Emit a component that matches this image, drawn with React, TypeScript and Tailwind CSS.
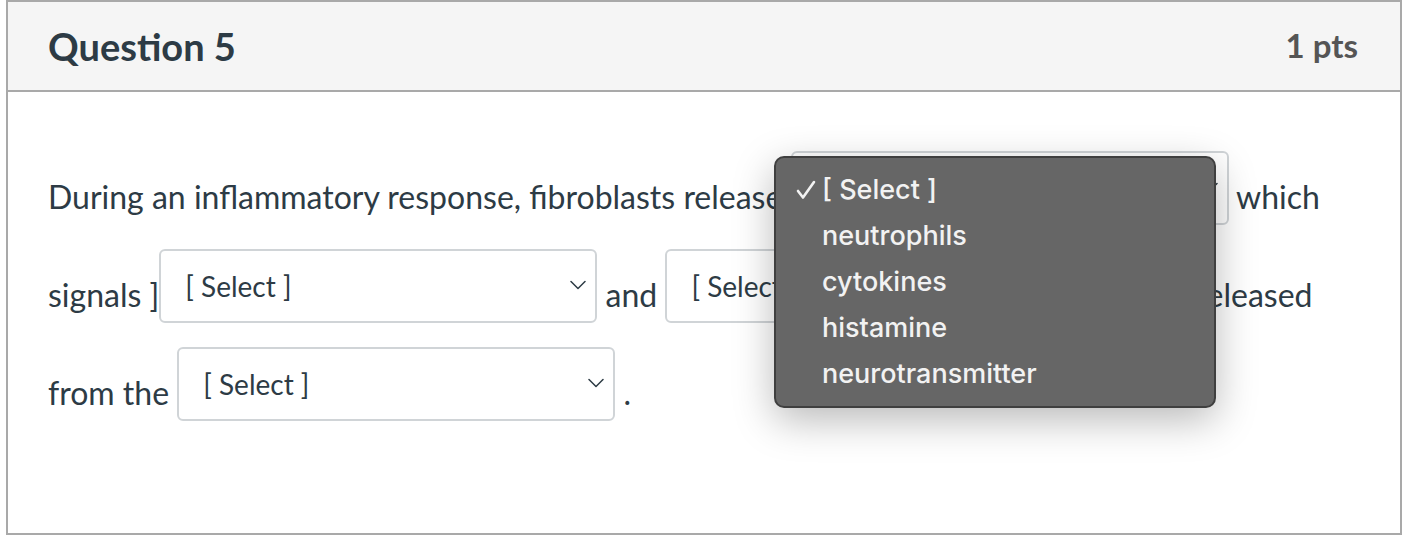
import React from "react";

const options = ["[ Select ]", "neutrophils", "cytokines", "histamine", "neurotransmitter"];

function Chevron() {
  return (
    <svg width="16" height="10" viewBox="0 0 16 10" fill="none" className="shrink-0">
      <path d="M1 1.5l7 7 7-7" stroke="#2d3b45" strokeWidth="1.5" strokeLinecap="round" strokeLinejoin="round" />
    </svg>
  );
}

function FakeSelect({ wide = false }: { wide?: boolean }) {
  return (
    <span
      className={
        "inline-flex h-[74px] items-center justify-between rounded-[6px] border-2 border-[#d0d4d7] bg-white pl-[24px] pr-[9px] [vertical-align:10px] text-[28px] leading-none text-[#2d3b45] " +
        (wide ? "w-[470px]" : "w-[438px]")
      }
    >
      <span>[ Select ]</span>
      <span className="-mt-[2px]">
        <Chevron />
      </span>
    </span>
  );
}

function OpenMenu() {
  return (
    <div className="absolute left-[774px] top-[156px] w-[442px] rounded-[10px] border-2 border-[#3f3f3f] bg-[#666666] py-[9px] shadow-[0_12px_40px_rgba(0,0,0,0.28)] [font-family:Inter,'Noto_Sans',sans-serif]">
      {options.map((o, i) => (
        <div key={o} className="relative flex h-[46px] items-center pl-[46px] text-[27px] font-medium text-[#f2f2f2]">
          {i === 0 && (
            <svg width="20" height="20" viewBox="0 0 20 20" fill="none" className="absolute left-[20px] top-[13px]">
              <path d="M2 11l5 6.5L18 2" stroke="#f2f2f2" strokeWidth="2.6" strokeLinecap="round" strokeLinejoin="round" />
            </svg>
          )}
          {o}
        </div>
      ))}
    </div>
  );
}

export default function App() {
  return (
    <div className="relative h-[552px] w-[1428px] bg-white pl-[6px] [font-family:Lato,'Noto_Sans',sans-serif]">
      <div className="w-[1396px] border-2 border-[#a9a9a9]">
        <div className="flex h-[90px] items-center justify-between border-b-2 border-[#a9a9a9] bg-[#f5f5f5] px-[40px]">
          <h2 className="text-[38px] font-bold text-[#2d3b45]">Question 5</h2>
          <span className="mr-[2px] text-[33px] font-bold text-[#555555]">1 pts</span>
        </div>
        <div className="h-[441px] px-[40px] pt-[56px]">
          <p className="whitespace-nowrap text-[32px] leading-[98px] text-[#2d3b45]">
            During an inflammatory response, fibroblasts release <FakeSelect /> which
            <br />
            signals ]<FakeSelect /> and <FakeSelect wide /> are released
            <br />
            from the <FakeSelect /> .
          </p>
        </div>
      </div>
      <OpenMenu />
    </div>
  );
}
